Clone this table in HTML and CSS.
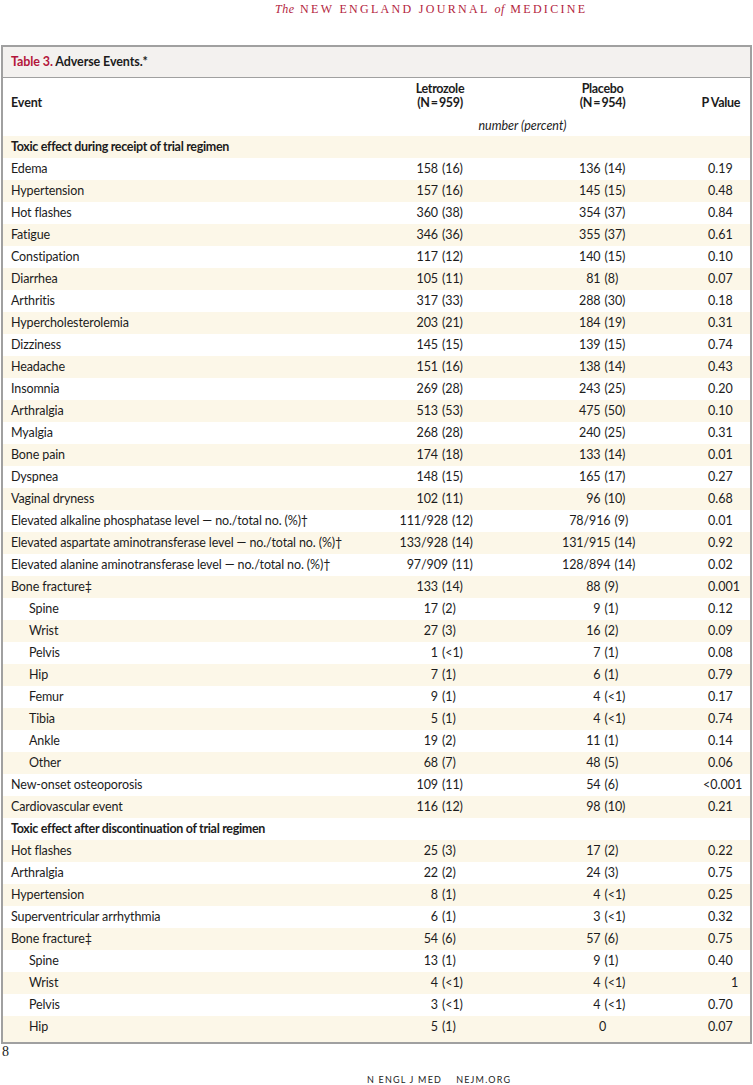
FILE: index.html
```html
<!DOCTYPE html>
<html lang="en">
<head>
<meta charset="utf-8">
<title>Table 3. Adverse Events</title>
<link rel="stylesheet" href="styles.css">
</head>
<body>
<header class="masthead"><span class="mh"><i>The</i> NEW ENGLAND JOURNAL <i>of</i> MEDICINE</span></header>

<section class="tbl">
  <div class="title"><span class="tnum">Table 3.</span> Adverse Events.*</div>
  <div class="head">
    <div class="ev">Event</div>
    <div class="ch">Letrozole<br>(N&thinsp;=&thinsp;959)</div>
    <div class="ch">Placebo<br>(N&thinsp;=&thinsp;954)</div>
    <div class="ch pv">P Value</div>
  </div>
  <div class="unit"><div class="unit-txt">number (percent)</div></div>
  <div class="body">
    <div class="r sec"><div class="ev">Toxic effect during receipt of trial regimen</div></div>
    <div class="r"><div class="ev">Edema</div><div class="n"><span>158</span><span>(16)</span></div><div class="n"><span>136</span><span>(14)</span></div><div class="p">0.19</div></div>
    <div class="r"><div class="ev">Hypertension</div><div class="n"><span>157</span><span>(16)</span></div><div class="n"><span>145</span><span>(15)</span></div><div class="p">0.48</div></div>
    <div class="r"><div class="ev">Hot flashes</div><div class="n"><span>360</span><span>(38)</span></div><div class="n"><span>354</span><span>(37)</span></div><div class="p">0.84</div></div>
    <div class="r"><div class="ev">Fatigue</div><div class="n"><span>346</span><span>(36)</span></div><div class="n"><span>355</span><span>(37)</span></div><div class="p">0.61</div></div>
    <div class="r"><div class="ev">Constipation</div><div class="n"><span>117</span><span>(12)</span></div><div class="n"><span>140</span><span>(15)</span></div><div class="p">0.10</div></div>
    <div class="r"><div class="ev">Diarrhea</div><div class="n"><span>105</span><span>(11)</span></div><div class="n"><span>81</span><span>(8)</span></div><div class="p">0.07</div></div>
    <div class="r"><div class="ev">Arthritis</div><div class="n"><span>317</span><span>(33)</span></div><div class="n"><span>288</span><span>(30)</span></div><div class="p">0.18</div></div>
    <div class="r"><div class="ev">Hypercholesterolemia</div><div class="n"><span>203</span><span>(21)</span></div><div class="n"><span>184</span><span>(19)</span></div><div class="p">0.31</div></div>
    <div class="r"><div class="ev">Dizziness</div><div class="n"><span>145</span><span>(15)</span></div><div class="n"><span>139</span><span>(15)</span></div><div class="p">0.74</div></div>
    <div class="r"><div class="ev">Headache</div><div class="n"><span>151</span><span>(16)</span></div><div class="n"><span>138</span><span>(14)</span></div><div class="p">0.43</div></div>
    <div class="r"><div class="ev">Insomnia</div><div class="n"><span>269</span><span>(28)</span></div><div class="n"><span>243</span><span>(25)</span></div><div class="p">0.20</div></div>
    <div class="r"><div class="ev">Arthralgia</div><div class="n"><span>513</span><span>(53)</span></div><div class="n"><span>475</span><span>(50)</span></div><div class="p">0.10</div></div>
    <div class="r"><div class="ev">Myalgia</div><div class="n"><span>268</span><span>(28)</span></div><div class="n"><span>240</span><span>(25)</span></div><div class="p">0.31</div></div>
    <div class="r"><div class="ev">Bone pain</div><div class="n"><span>174</span><span>(18)</span></div><div class="n"><span>133</span><span>(14)</span></div><div class="p">0.01</div></div>
    <div class="r"><div class="ev">Dyspnea</div><div class="n"><span>148</span><span>(15)</span></div><div class="n"><span>165</span><span>(17)</span></div><div class="p">0.27</div></div>
    <div class="r"><div class="ev">Vaginal dryness</div><div class="n"><span>102</span><span>(11)</span></div><div class="n"><span>96</span><span>(10)</span></div><div class="p">0.68</div></div>
    <div class="r"><div class="ev">Elevated alkaline phosphatase level — no./total no. (%)†</div><div class="n w"><span>111/928</span><span>(12)</span></div><div class="n w"><span>78/916</span><span>(9)</span></div><div class="p">0.01</div></div>
    <div class="r"><div class="ev">Elevated aspartate aminotransferase level — no./total no. (%)†</div><div class="n w"><span>133/928</span><span>(14)</span></div><div class="n w"><span>131/915</span><span>(14)</span></div><div class="p">0.92</div></div>
    <div class="r"><div class="ev">Elevated alanine aminotransferase level — no./total no. (%)†</div><div class="n w"><span>97/909</span><span>(11)</span></div><div class="n w"><span>128/894</span><span>(14)</span></div><div class="p">0.02</div></div>
    <div class="r"><div class="ev">Bone fracture‡</div><div class="n"><span>133</span><span>(14)</span></div><div class="n"><span>88</span><span>(9)</span></div><div class="p">0.001</div></div>
    <div class="r"><div class="ev sub">Spine</div><div class="n"><span>17</span><span>(2)</span></div><div class="n"><span>9</span><span>(1)</span></div><div class="p">0.12</div></div>
    <div class="r"><div class="ev sub">Wrist</div><div class="n"><span>27</span><span>(3)</span></div><div class="n"><span>16</span><span>(2)</span></div><div class="p">0.09</div></div>
    <div class="r"><div class="ev sub">Pelvis</div><div class="n"><span>1</span><span>(&lt;1)</span></div><div class="n"><span>7</span><span>(1)</span></div><div class="p">0.08</div></div>
    <div class="r"><div class="ev sub">Hip</div><div class="n"><span>7</span><span>(1)</span></div><div class="n"><span>6</span><span>(1)</span></div><div class="p">0.79</div></div>
    <div class="r"><div class="ev sub">Femur</div><div class="n"><span>9</span><span>(1)</span></div><div class="n"><span>4</span><span>(&lt;1)</span></div><div class="p">0.17</div></div>
    <div class="r"><div class="ev sub">Tibia</div><div class="n"><span>5</span><span>(1)</span></div><div class="n"><span>4</span><span>(&lt;1)</span></div><div class="p">0.74</div></div>
    <div class="r"><div class="ev sub">Ankle</div><div class="n"><span>19</span><span>(2)</span></div><div class="n"><span>11</span><span>(1)</span></div><div class="p">0.14</div></div>
    <div class="r"><div class="ev sub">Other</div><div class="n"><span>68</span><span>(7)</span></div><div class="n"><span>48</span><span>(5)</span></div><div class="p">0.06</div></div>
    <div class="r"><div class="ev">New-onset osteoporosis</div><div class="n"><span>109</span><span>(11)</span></div><div class="n"><span>54</span><span>(6)</span></div><div class="p lt">&lt;0.001</div></div>
    <div class="r"><div class="ev">Cardiovascular event</div><div class="n"><span>116</span><span>(12)</span></div><div class="n"><span>98</span><span>(10)</span></div><div class="p">0.21</div></div>
    <div class="r sec"><div class="ev">Toxic effect after discontinuation of trial regimen</div></div>
    <div class="r"><div class="ev">Hot flashes</div><div class="n"><span>25</span><span>(3)</span></div><div class="n"><span>17</span><span>(2)</span></div><div class="p">0.22</div></div>
    <div class="r"><div class="ev">Arthralgia</div><div class="n"><span>22</span><span>(2)</span></div><div class="n"><span>24</span><span>(3)</span></div><div class="p">0.75</div></div>
    <div class="r"><div class="ev">Hypertension</div><div class="n"><span>8</span><span>(1)</span></div><div class="n"><span>4</span><span>(&lt;1)</span></div><div class="p">0.25</div></div>
    <div class="r"><div class="ev">Superventricular arrhythmia</div><div class="n"><span>6</span><span>(1)</span></div><div class="n"><span>3</span><span>(&lt;1)</span></div><div class="p">0.32</div></div>
    <div class="r"><div class="ev">Bone fracture‡</div><div class="n"><span>54</span><span>(6)</span></div><div class="n"><span>57</span><span>(6)</span></div><div class="p">0.75</div></div>
    <div class="r"><div class="ev sub">Spine</div><div class="n"><span>13</span><span>(1)</span></div><div class="n"><span>9</span><span>(1)</span></div><div class="p">0.40</div></div>
    <div class="r"><div class="ev sub">Wrist</div><div class="n"><span>4</span><span>(&lt;1)</span></div><div class="n"><span>4</span><span>(&lt;1)</span></div><div class="p one">1</div></div>
    <div class="r"><div class="ev sub">Pelvis</div><div class="n"><span>3</span><span>(&lt;1)</span></div><div class="n"><span>4</span><span>(&lt;1)</span></div><div class="p">0.70</div></div>
    <div class="r"><div class="ev sub">Hip</div><div class="n"><span>5</span><span>(1)</span></div><div class="n c">0</div><div class="p">0.07</div></div>
  </div>
  <div class="tail"></div>
</section>

<div class="folio">8</div>
<footer class="foot">N ENGL J MED&nbsp;&nbsp;&nbsp; NEJM.ORG</footer>
</body>
</html>
```

FILE: styles.css
```css
html, body {
  margin: 0;
  padding: 0;
  background: #ffffff;
}

body {
  width: 753px;
  height: 1085px;
  overflow: hidden;
  font-family: Lato, "Noto Sans", sans-serif;
  font-size: 12.5px;
  color: #1c1c1c;
}

/* masthead */
.masthead {
  height: 45px;
  box-sizing: border-box;
  padding: 1px 0 0 275px;
}

.mh {
  font-family: "Liberation Serif", "DejaVu Serif", serif;
  font-size: 12px;
  letter-spacing: 2.3px;
  color: #b3243d;
  line-height: 14px;
}

.mh i {
  letter-spacing: 0.6px;
}

/* table box */
.tbl {
  margin-left: 1px;
  width: 751px;
  box-sizing: border-box;
  border: 2px solid #a0a0a0;
  background: #ffffff;
}

.title {
  height: 30px;
  line-height: 30px;
  padding-left: 8px;
  background: #f3f1ef;
  border-bottom: 1px solid #a0a0a0;
  font-weight: 700;
  font-size: 12.5px;
  letter-spacing: -0.1px;
}

.tnum {
  color: #b3163b;
}

.head,
.r,
.unit {
  display: grid;
  grid-template-columns: 357px 160px 165px 65px;
}

.head {
  height: 38px;
  box-sizing: border-box;
  padding-bottom: 6px;
  align-items: end;
  font-weight: 700;
  line-height: 14px;
  letter-spacing: -0.35px;
}

.head .ch {
  text-align: center;
}

.head .pv {
  text-align: right;
  padding-right: 10px;
}

.ev {
  padding-left: 8px;
  white-space: nowrap;
  letter-spacing: -0.12px;
}

.unit {
  height: 20px;
  line-height: 20px;
}

.unit-txt {
  grid-column: 2 / 4;
  text-align: center;
  font-style: italic;
}

.r {
  height: 22px;
  line-height: 22px;
}

.r:nth-child(odd) {
  background: #fcf7e8;
}

.sec .ev {
  font-weight: 700;
  letter-spacing: -0.32px;
}

.ev.sub {
  padding-left: 26px;
}

.n {
  display: grid;
  grid-template-columns: 1fr 1fr;
  column-gap: 4px;
  white-space: nowrap;
  letter-spacing: -0.1px;
}

.n span:first-child {
  text-align: right;
}

.n.w {
  padding-left: 20px;
}

.n.c {
  display: block;
  text-align: center;
}

.p {
  padding-left: 23px;
  white-space: nowrap;
}

.p.lt {
  text-indent: -5px;
}

.p.one {
  padding-left: 46px;
}

.tail {
  height: 4px;
  background: #fcf7e8;
}

/* page foot */
.folio {
  font-family: "Liberation Serif", "DejaVu Serif", serif;
  font-size: 14px;
  line-height: 14px;
  padding: 0 0 0 2px;
  margin-top: 1px;
  color: #1c1c1c;
}

.foot {
  margin-top: 15px;
  padding-left: 367px;
  font-size: 9px;
  letter-spacing: 1.2px;
  line-height: 12px;
  color: #1c1c1c;
}
```
